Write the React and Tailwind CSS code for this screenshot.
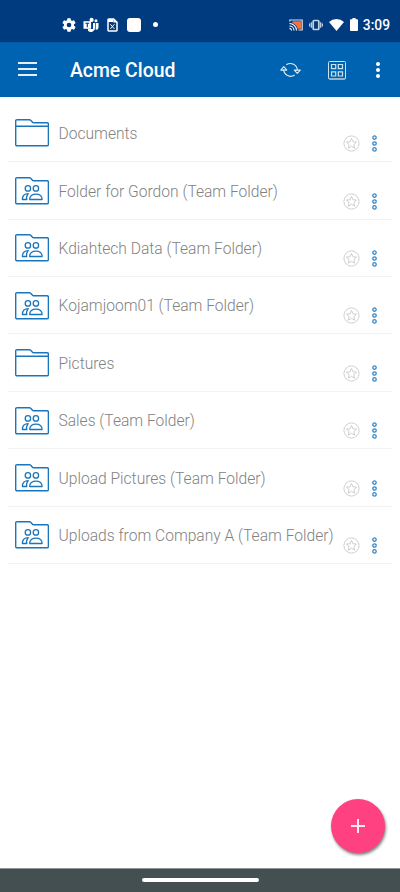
const folders = [
  { name: 'Documents', team: false },
  { name: 'Folder for Gordon (Team Folder)', team: true },
  { name: 'Kdiahtech Data (Team Folder)', team: true },
  { name: 'Kojamjoom01 (Team Folder)', team: true },
  { name: 'Pictures', team: false },
  { name: 'Sales (Team Folder)', team: true },
  { name: 'Upload Pictures (Team Folder)', team: true },
  { name: 'Uploads from Company A (Team Folder)', team: true },
]

function StatusBar() {
  return (
    <div className="flex h-[42px] shrink-0 items-center bg-[#003a7f] pt-[7px] pr-[10px] pl-[62px] text-white">
      {/* Settings */}
      <svg className="h-[14px] w-[14px]" viewBox="2 2 20 20" fill="currentColor">
        <path d="M19.14 12.94c.04-.3.06-.61.06-.94s-.02-.64-.07-.94l2.03-1.58a.49.49 0 0 0 .12-.61l-1.92-3.32a.49.49 0 0 0-.59-.22l-2.39.96a7 7 0 0 0-1.62-.94l-.36-2.54a.48.48 0 0 0-.48-.41h-3.84a.48.48 0 0 0-.47.41l-.36 2.54c-.59.24-1.13.57-1.62.94l-2.39-.96a.49.49 0 0 0-.59.22L2.74 8.87a.48.48 0 0 0 .12.61l2.03 1.58a6 6 0 0 0 0 1.88l-2.03 1.58a.49.49 0 0 0-.12.61l1.92 3.32c.12.22.37.29.59.22l2.39-.96c.5.38 1.03.7 1.62.94l.36 2.54c.05.24.24.41.48.41h3.84c.24 0 .44-.17.47-.41l.36-2.54a7 7 0 0 0 1.62-.94l2.39.96c.22.08.47 0 .59-.22l1.92-3.32a.48.48 0 0 0-.12-.61zM12 15.3a3.3 3.3 0 1 1 0-6.6 3.3 3.3 0 0 1 0 6.6" />
      </svg>
      {/* Teams */}
      <svg className="ml-[7px] h-4 w-4" viewBox="0 0 16 16" fill="none">
        <circle cx="8.6" cy="2.9" r="2.1" fill="white" />
        <circle cx="13" cy="3.8" r="1.5" fill="white" />
        <path d="M10 6h2v5a4 4 0 0 1-7 2.7V12h5zM12.8 6H15.5v4.4a2.4 2.4 0 0 1-2.9 2.2z" fill="white" />
        <rect x="0.5" y="4.2" width="7.6" height="7.6" fill="white" />
        <path d="M2.4 6.3h3.8M4.3 6.3v4" stroke="#003a7f" strokeWidth="1.1" />
      </svg>
      {/* File */}
      <svg className="ml-2 h-[14px] w-[11px]" viewBox="0 0 11 14" fill="none">
        <path d="M1.7 1h5l3.3 3.2v8.1a.7.7 0 0 1-.7.7H1.7a.7.7 0 0 1-.7-.7V1.7A.7.7 0 0 1 1.7 1z" stroke="white" strokeWidth="1.5" />
        <path d="M6.3 1v3.6H10V4zM1 1h5v3H1z" fill="white" />
        <path d="M3.4 6.3l4 4.6M7.4 6.3l-4 4.6" stroke="white" />
      </svg>
      <span className="ml-[9px] h-[14px] w-[14px] rounded-[3px] bg-white" />
      <span className="ml-[12px] h-[5px] w-[5px] rounded-full bg-white" />
      <div className="flex-1" />
      {/* Cast */}
      <svg className="h-[12px] w-[14px]" viewBox="0 0 14 12" fill="none">
        <path d="M3.5 2.3h8.7v7.4H8.6A8 8 0 0 0 3.5 4z" fill="#f2703e" />
        <path d="M.8 2.6V1h12.4v10H9.3" stroke="#d5e0ea" strokeWidth="1.2" />
        <path d="M.5 4.5A7 7 0 0 1 7.5 11.5M.5 7a4.5 4.5 0 0 1 4.5 4.5M.5 9.4a2 2 0 0 1 2 2.1" stroke="white" strokeWidth="1.1" />
      </svg>
      {/* Vibrate */}
      <svg className="ml-[6px] h-[12px] w-[14px]" viewBox="0 0 14 12" fill="none" stroke="#c4d3e3">
        <rect x="4.2" y="1.5" width="5.6" height="9" rx="0.8" strokeWidth="1.7" />
        <path d="M2.3 3.3v5.4M11.7 3.3v5.4" strokeWidth="1.3" />
        <path d="M.6 4.5v3M13.4 4.5v3" strokeWidth="1.1" />
      </svg>
      {/* Wifi */}
      <svg className="ml-[6px] h-[12px] w-[15px]" viewBox="0 0 15 12" fill="white">
        <path d="M0 3a11 11 0 0 1 15 0L7.5 12z" />
      </svg>
      {/* Battery */}
      <svg className="ml-[6px] h-[13px] w-[8px]" viewBox="0 0 8 14" preserveAspectRatio="none" fill="white">
        <path d="M2.4 0h3.2v1.4h1.6c.4 0 .8.4.8.8v11c0 .4-.4.8-.8.8H.8c-.4 0-.8-.4-.8-.8v-11c0-.4.4-.8.8-.8h1.6z" />
      </svg>
      <span className="ml-[5px] pt-[3px] text-[13.8px] leading-none font-medium">3:09</span>
    </div>
  )
}

function Header() {
  return (
    <header className="flex h-[55px] shrink-0 items-center border-t border-[#0059a3] bg-[#0063b1] pr-[20px] pl-[18px] text-white">
      <button aria-label="Menu" className="flex w-[19px] flex-col gap-1 pb-[3px]">
        <span className="h-[2px] w-full bg-white/90" />
        <span className="h-[2px] w-full bg-white/90" />
        <span className="h-[2px] w-full bg-white/90" />
      </button>
      <h1 className="ml-[33px] flex-1 pt-[2px] text-[19.4px] leading-none font-medium">Acme Cloud</h1>
      <svg className="h-4 w-[21px]" viewBox="0 0 21 16" fill="none" stroke="#d9ecf5" strokeWidth="1.1" strokeLinejoin="round">
        <path d="M6.3 2.8A7 7 0 0 1 17.3 8.6M14.7 13A7 7 0 0 1 3.7 7.6" />
        <path d="M.8 8.1h6L3.8 4.7zM14.3 8.1h6l-3 3.3z" />
      </svg>
      <svg className="ml-[27px] h-[19px] w-[18px]" viewBox="0 0 18 19" fill="none" stroke="#c9e2ef" strokeWidth="1">
        <rect x="0.5" y="0.5" width="17" height="17.5" rx="1" />
        <path d="M1 18h16" stroke="#c9c5bd" />
        <path d="M3.5 3.5h4.2v4.2H3.5zM10.3 3.5h4.2v4.2h-4.2zM3.5 10.8h4.2V15H3.5zM10.3 10.8h4.2V15h-4.2z" strokeWidth="1.2" />
      </svg>
      <svg className="ml-[30px] h-4 w-1" viewBox="0 0 4 16" fill="white">
        <circle cx="2" cy="2" r="2" />
        <circle cx="2" cy="8" r="2" />
        <circle cx="2" cy="14" r="2" />
      </svg>
    </header>
  )
}

function FolderIcon({ team }) {
  return (
    <svg className="h-7 w-[34px] shrink-0" viewBox="0 0 34 28" fill="none" stroke="#1a76bc" strokeWidth="1.4" strokeLinejoin="round">
      <path d="M.7 25.4V1.9C.7 1.1 1.2.7 2 .7h12.3c.6 0 1 .2 1.4.6l1.8 2c.3.4.6.5 1.1.5H32c.9 0 1.4.5 1.4 1.3v20.3c0 .9-.5 1.4-1.4 1.4H2c-.8 0-1.3-.5-1.3-1.4z" />
      {team ? (
        <g strokeWidth="1.3">
          <circle cx="12.9" cy="11.4" r="2.7" />
          <circle cx="20.9" cy="11.4" r="2.7" />
          <path d="M13.2 16.6c-3.4 0-5.8 2-5.8 5.9h4.4c-.7-2 0-4 1.4-5.9z" />
          <path d="M14.7 22.5c-.2-3.6 2.6-5.4 6.2-5.4s6.4 1.8 6.2 5.4z" />
        </g>
      ) : (
        <path d="M.7 7.3h32.6" />
      )}
    </svg>
  )
}

function FolderRow({ name, team }) {
  return (
    <li className="flex h-[57.43px] border-b border-[#f3f3f3] pl-[7px]">
      <div className="pt-[14.8px]">
        <FolderIcon team={team} />
      </div>
      <span className="ml-[9.5px] flex-1 pt-[19.4px] text-[15.6px] leading-5 font-light whitespace-nowrap text-[#828282]">{name}</span>
      <svg className="mt-[30.5px] h-[17px] w-[17px] shrink-0" viewBox="0 0 17 17" fill="none" stroke="#cfcfcf" strokeLinejoin="round">
        <circle cx="8.5" cy="8.5" r="7.6" />
        <path d="M8.5 3.4l1.5 3.4 3.6.3-2.7 2.4.8 3.7-3.2-1.9-3.2 1.9.8-3.7-2.7-2.4 3.6-.3z" />
      </svg>
      <svg className="mt-[30.5px] mr-[14.6px] ml-[12px] h-[17px] w-[5px] shrink-0" viewBox="0 0 5 17" fill="none" stroke="#3587c6" strokeWidth="1.3">
        <circle cx="2.5" cy="2.6" r="1.7" />
        <circle cx="2.5" cy="8.5" r="1.7" />
        <circle cx="2.5" cy="14.4" r="1.7" />
      </svg>
    </li>
  )
}

export default function App() {
  return (
    <div className="relative flex h-[892px] w-[400px] flex-col overflow-hidden bg-white font-['Roboto',sans-serif]">
      <StatusBar />
      <Header />
      <ul className="flex-1 pt-[7.7px] pr-2 pl-2">
        {folders.map((folder) => (
          <FolderRow key={folder.name} name={folder.name} team={folder.team} />
        ))}
      </ul>

      {/* Add button */}
      <button
        aria-label="Add"
        className="absolute right-[15px] bottom-[39px] flex h-[54px] w-[54px] items-center justify-center rounded-full bg-[#ff4081] shadow-[1px_2px_3px_rgba(0,0,0,0.5)]"
      >
        <svg className="h-[14px] w-[14px]" viewBox="0 0 14 14" stroke="#ffe9f0" strokeWidth="2">
          <path d="M7 0v14M0 7h14" />
        </svg>
      </button>

      {/* Gesture bar */}
      <div className="flex h-6 shrink-0 justify-center border-t border-[#909698] bg-[#444f52] pt-[9px]">
        <span className="h-[4px] w-[117px] rounded-full bg-white" />
      </div>
    </div>
  )
}
